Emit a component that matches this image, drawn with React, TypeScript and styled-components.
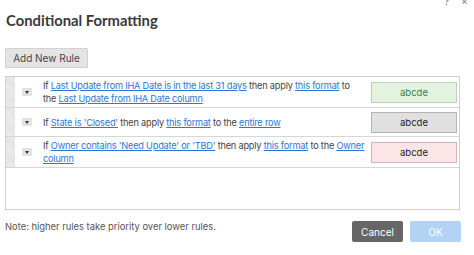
import React, { FC } from 'react';
import styled, { createGlobalStyle } from 'styled-components';

const GlobalStyle = createGlobalStyle`
  html, body {
    margin: 0;
    padding: 0;
    background: #fff;
    width: 474px;
    height: 255px;
    overflow: hidden;
  }
  body {
    font-family: Inter, 'Liberation Sans', Arial, sans-serif;
    color: #333;
  }
`;

const Dialog = styled.div`
  position: relative;
  width: 474px;
  height: 255px;
  padding: 10px 14px 0 5px;
  box-sizing: border-box;
  display: flex;
  flex-direction: column;
`;

const TopIcons = styled.div`
  position: absolute;
  top: -6px;
  right: 2px;
  font-size: 11px;
  color: #888;
  letter-spacing: 4px;
`;

const Title = styled.h1`
  margin: 0 0 0 1px;
  font-family: Lato, 'Open Sans', sans-serif;
  font-weight: 700;
  font-size: 14.8px;
  line-height: 20px;
  color: #3a3a3a;
`;

const Toolbar = styled.div`
  display: flex;
  margin-top: 18px;
`;

const GreyButton = styled.button`
  height: 20px;
  width: 83px;
  padding: 0;
  background: #e4e4e4;
  border: 1px solid #d2d2d2;
  border-radius: 1px;
  font-family: Inter, 'Liberation Sans', sans-serif;
  font-size: 10px;
  color: #444;
`;

const RulesBox = styled.div`
  margin-top: 8px;
  height: 134px;
  width: 455px;
  box-sizing: border-box;
  border: 1px solid #cfcfcf;
  display: flex;
  flex-direction: column;
`;

const Row = styled.div<{ $h: number }>`
  display: grid;
  grid-template-columns: 9px 28px 1fr 88px;
  height: ${(p) => p.$h}px;
  border-bottom: 1px solid #d6d6d6;
  box-sizing: border-box;
`;

const Gutter = styled.div`
  background: repeating-linear-gradient(
    45deg,
    #ececec 0,
    #ececec 1px,
    #e2e2e2 1px,
    #e2e2e2 2px
  );
  border-right: 1px solid #e4e4e4;
`;

const ToggleCell = styled.div`
  display: flex;
  align-items: center;
  padding-left: 7px;
`;

const Toggle = styled.div`
  width: 10px;
  height: 8px;
  background: #e2e2e2;
  border-radius: 1px;
  display: flex;
  align-items: center;
  justify-content: center;
  &::after {
    content: '';
    border-left: 2.5px solid transparent;
    border-right: 2.5px solid transparent;
    border-top: 3px solid #333;
  }
`;

const RuleText = styled.div`
  align-self: center;
  font-size: 9.2px;
  letter-spacing: -0.2px;
  line-height: 13px;
  color: #444;
  padding-right: 2px;
`;

const Link = styled.a`
  color: #2a78d6;
  text-decoration: underline;
  text-underline-offset: 1px;
`;

const Swatch = styled.div<{ $bg: string; $border: string; $color: string }>`
  align-self: center;
  width: 86px;
  height: 21px;
  box-sizing: border-box;
  background: ${(p) => p.$bg};
  border: 1px solid ${(p) => p.$border};
  color: ${(p) => p.$color};
  font-size: 9.5px;
  display: flex;
  align-items: center;
  justify-content: center;
`;

const Footer = styled.div`
  display: flex;
  align-items: flex-start;
  margin-top: 11px;
  width: 456px;
`;

const Note = styled.div`
  flex: 1;
  font-size: 9.4px;
  line-height: 12px;
  color: #555;
`;

const ActionButton = styled.button<{ $bg: string }>`
  width: 51px;
  height: 21px;
  padding: 0;
  margin-left: 7px;
  border: none;
  border-radius: 2px;
  background: ${(p) => p.$bg};
  color: #fff;
  font-family: Inter, 'Liberation Sans', sans-serif;
  font-size: 10px;
`;

type Rule = {
  h: number;
  text: React.ReactNode;
  bg: string;
  border: string;
  color: string;
};

const rules: Rule[] = [
  {
    h: 31,
    text: (
      <>
        If <Link>Last Update from IHA Date is in the last 31 days</Link> then apply{' '}
        <Link>this format</Link> to
        <br />
        the <Link>Last Update from IHA Date column</Link>
      </>
    ),
    bg: '#e3f3df',
    border: '#b9d4b3',
    color: '#3d7d3d',
  },
  {
    h: 29,
    text: (
      <>
        If <Link>State is 'Closed'</Link> then apply <Link>this format</Link> to the{' '}
        <Link>entire row</Link>
      </>
    ),
    bg: '#e0e0e0',
    border: '#b4b4b4',
    color: '#222',
  },
  {
    h: 31,
    text: (
      <>
        If <Link>Owner contains 'Need Update' or 'TBD'</Link> then apply{' '}
        <Link>this format</Link> to the <Link>Owner</Link>
        <br />
        <Link>column</Link>
      </>
    ),
    bg: '#fde5e7',
    border: '#d8b2b6',
    color: '#222',
  },
];

const App: FC = () => (
  <>
    <GlobalStyle />
    <Dialog>
      <TopIcons>? ×</TopIcons>
      <Title>Conditional Formatting</Title>
      <Toolbar>
        <GreyButton>Add New Rule</GreyButton>
      </Toolbar>
      <RulesBox>
        {rules.map((r, i) => (
          <Row key={i} $h={r.h}>
            <Gutter />
            <ToggleCell>
              <Toggle />
            </ToggleCell>
            <RuleText>{r.text}</RuleText>
            <Swatch $bg={r.bg} $border={r.border} $color={r.color}>
              abcde
            </Swatch>
          </Row>
        ))}
      </RulesBox>
      <Footer>
        <Note>Note: higher rules take priority over lower rules.</Note>
        <ActionButton $bg="#666666">Cancel</ActionButton>
        <ActionButton $bg="#b3d3f4">OK</ActionButton>
      </Footer>
    </Dialog>
  </>
);

export default App;
